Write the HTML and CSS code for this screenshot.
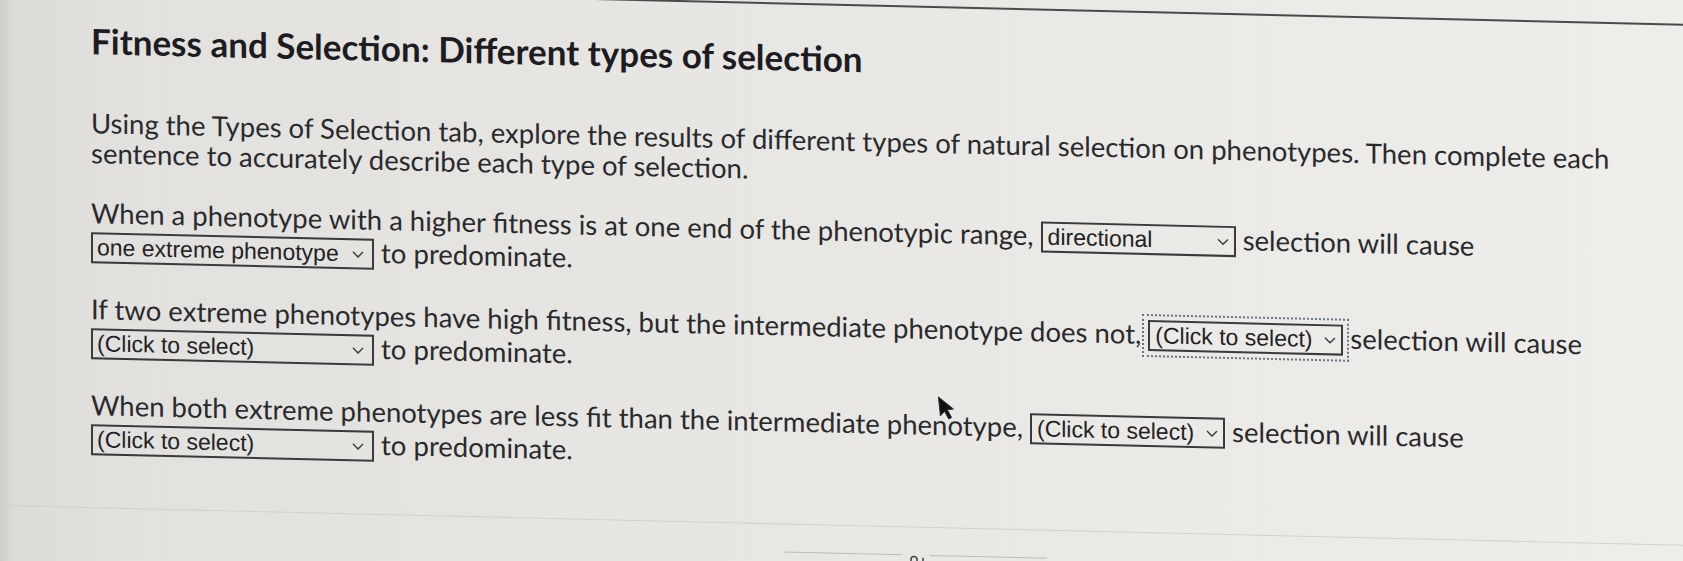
FILE: index.html
```html
<!DOCTYPE html>
<html lang="en">
<head>
<meta charset="utf-8">
<title>Fitness and Selection: Different types of selection</title>
<link rel="stylesheet" href="styles.css">
</head>
<body>
<div class="stage">
  <main class="content">
    <h1 class="title">Fitness and Selection: Different types of selection</h1>
    <p class="intro">Using the Types of Selection tab, explore the results of different types of natural selection on phenotypes. Then complete each sentence to accurately describe each type of selection.</p>

    <p class="question">When a phenotype with a higher fitness is at one end of the phenotypic range, <span class="select select--short"><span class="select-text">directional</span><svg class="chevron" width="12" height="8" viewBox="0 0 12 8"><path d="M1 1.5 L6 6.5 L11 1.5"/></svg></span> selection will cause <span class="select select--long"><span class="select-text">one extreme phenotype</span><svg class="chevron" width="12" height="8" viewBox="0 0 12 8"><path d="M1 1.5 L6 6.5 L11 1.5"/></svg></span> to predominate.</p>

    <p class="question">If two extreme phenotypes have high fitness, but the intermediate phenotype does not, <span class="select select--short select--focus"><span class="select-text">(Click to select)</span><svg class="chevron" width="12" height="8" viewBox="0 0 12 8"><path d="M1 1.5 L6 6.5 L11 1.5"/></svg></span> selection will cause <span class="select select--long"><span class="select-text">(Click to select)</span><svg class="chevron" width="12" height="8" viewBox="0 0 12 8"><path d="M1 1.5 L6 6.5 L11 1.5"/></svg></span> to predominate.</p>

    <p class="question">When both extreme phenotypes are less fit than the intermediate phenotype, <span class="select select--short"><span class="select-text">(Click to select)</span><svg class="chevron" width="12" height="8" viewBox="0 0 12 8"><path d="M1 1.5 L6 6.5 L11 1.5"/></svg></span> selection will cause <span class="select select--long"><span class="select-text">(Click to select)</span><svg class="chevron" width="12" height="8" viewBox="0 0 12 8"><path d="M1 1.5 L6 6.5 L11 1.5"/></svg></span> to predominate.</p>
  </main>

  <div class="divider"></div>

  <div class="footer-mark">
    <span class="footer-line"></span>
    <svg class="footer-icon" width="16" height="14" viewBox="0 0 16 14"><path d="M3 12 V5 a3 3 0 0 1 6 0 V9 a3 3 0 0 0 6 0 V3"/></svg>
    <span class="footer-line"></span>
  </div>
</div>

<svg class="cursor" width="18" height="27" viewBox="0 0 16 24"><path d="M1.5 1 L1.5 18 L5.5 14.2 L8.6 21.5 L11.2 20.4 L8.2 13.2 L13.6 13 Z"/></svg>
</body>
</html>
```

FILE: styles.css
```css
html, body {
  margin: 0;
  padding: 0;
}

body {
  width: 1683px;
  height: 561px;
  overflow: hidden;
  position: relative;
  background: linear-gradient(90deg, #cfcecb 0px, #dcdbd7 14px, #e2e1dd 120px, #e7e6e2 700px, #ebeae6 1200px, #eeede9 1683px);
  font-family: "Lato", "Liberation Sans", sans-serif;
  color: #2a2a2e;
}

.stage {
  border-top: 2px solid #4a4a4e;
  padding-top: 31px;
  transform: translateY(-16px) skewY(1.35deg);
  transform-origin: 0 0;
}

.content {
  padding-left: 91px;
  width: 1570px;
}

.title {
  margin: 0;
  font-size: 35px;
  font-weight: 700;
  line-height: 42px;
  color: #1c1c22;
}

.intro {
  margin: 47px 0 0;
  font-size: 27.5px;
  line-height: 30px;
}

.question {
  margin: 29px 0 0;
  font-size: 27.5px;
  line-height: 32px;
}

.question + .question {
  margin-top: 30px;
}

.select {
  display: inline-flex;
  align-items: center;
  justify-content: space-between;
  box-sizing: border-box;
  height: 31px;
  border: 2px solid #3a3a3e;
  font-family: "Liberation Sans", Arial, sans-serif;
  font-size: 23px;
  line-height: 27px;
  color: #222226;
  vertical-align: 1px;
}

.select--long {
  width: 283px;
  padding: 0 8px 0 4px;
}

.select--short {
  width: 195px;
  padding: 0 5px 0 5px;
}

.select--focus {
  outline: 2px dotted #66758a;
  outline-offset: 4px;
}

.chevron {
  flex: none;
}

.chevron path {
  fill: none;
  stroke: #3a3a3e;
  stroke-width: 1.4;
}

.divider {
  margin-top: 52px;
  height: 1px;
  background: #d2d1cd;
}

.footer-mark {
  margin: 27px 0 0 784px;
  width: 263px;
  display: flex;
  align-items: flex-start;
  gap: 6px;
}

.footer-line {
  flex: 1;
  height: 1px;
  background: #bdbcb8;
}

.footer-icon path {
  fill: none;
  stroke: #4a4a4e;
  stroke-width: 1.6;
}

.cursor {
  position: absolute;
  left: 938px;
  top: 395px;
  transform: rotate(-6deg);
}

.cursor path {
  fill: #111114;
  stroke: #2a2a2e;
  stroke-width: 0.8;
}
```
